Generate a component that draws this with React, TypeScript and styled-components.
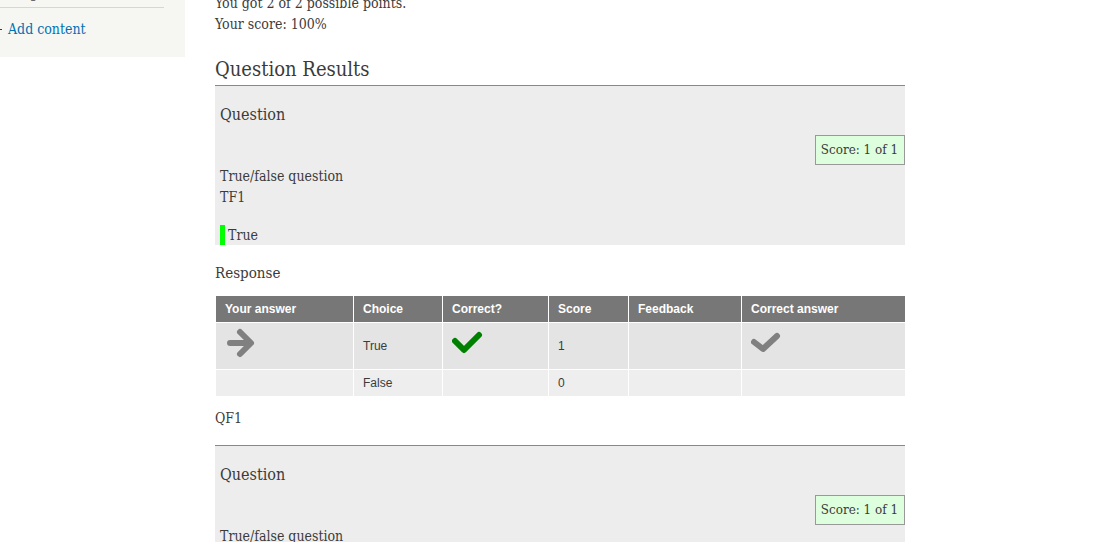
import React from "react";
import styled, {createGlobalStyle} from "styled-components";

const GlobalStyle = createGlobalStyle`
    html, body {
        margin: 0;
        padding: 0;
        background: #fff;
    }
    body {
        font-family: "DejaVu Serif Condensed", "DejaVu Serif", Georgia, serif;
        font-stretch: condensed;
        font-size: 14px;
        line-height: 21px;
        color: #3b3b3b;
        overflow: hidden;
    }
`;

const Page = styled.div`
    display: flex;
    align-items: flex-start;
    gap: 30px;
`;

const Sidebar = styled.aside`
    width: 164px;
    padding: 0 21px 17px 0;
    background: #f6f6f2;
`;

const BlockTitle = styled.h2`
    margin: -14px 0 0;
    height: 21px;
    font-size: 14px;
    line-height: 14px;
    font-weight: normal;
    border-bottom: 1px solid #d6d6d6;
    overflow: hidden;
`;

const Menu = styled.ul`
    list-style: none;
    margin: 11px 0 0;
    padding: 0;
`;

const MenuItem = styled.li`
    position: relative;
    padding-left: 8px;

    &::before {
        content: "";
        position: absolute;
        left: 0;
        top: 10px;
        width: 2px;
        height: 1px;
        background: #3b3b3b;
    }
`;

const MenuLink = styled.a`
    color: #0071b3;
    text-decoration: none;
`;

const Main = styled.main`
    width: 690px;
    margin-top: -7px;
`;

const Line = styled.p`
    margin: 0;
`;

const SectionTitle = styled.h2`
    margin: 21px 0 0;
    padding-bottom: 3px;
    font-size: 20px;
    line-height: 26px;
    font-weight: normal;
`;

const Result = styled.section`
    border-top: 1px solid #888;
`;

const QuestionBox = styled.div`
    background: #ededed;
    padding: 17px 0 0 5px;
`;

const QuestionTitle = styled.h3`
    margin: 0;
    font-size: 16px;
    line-height: 24px;
    font-weight: normal;
`;

const ScoreRow = styled.div`
    display: flex;
    justify-content: flex-end;
    margin: 8px 0 1px;
`;

const ScoreBadge = styled.div`
    background: #ddffdd;
    border: 1px solid #999;
    padding: 0 6px 0 5px;
    font-size: 13.3px;
    line-height: 28px;
`;

const Choice = styled.div`
    margin-top: 17px;
    border-left: 5px solid #00ff00;
    padding-left: 3px;
    line-height: 20px;
`;

const Subtitle = styled.h4`
    margin: 18px 0 0;
    font-size: 15px;
    line-height: 21px;
    font-weight: normal;
`;

const Table = styled.table`
    margin-top: 12px;
    width: 690px;
    border-collapse: collapse;
    table-layout: fixed;
    font-family: "Liberation Sans", Arial, sans-serif;
    font-stretch: normal;
    font-size: 12px;
    line-height: 18px;
`;

const HeadCell = styled.th<{ $w: number }>`
    box-sizing: border-box;
    width: ${({$w}) => $w}px;
    background: #777;
    color: #fff;
    font-weight: bold;
    text-align: left;
    padding: 4px 9px;
    border: 1px solid #fff;
    border-top: none;
`;

const Row = styled.tr<{ $picked?: boolean }>`
    background: ${({$picked}) => $picked ? "#e4e4e4" : "#eeeeee"};
`;

const Cell = styled.td`
    padding: 4px 9px;
    border: 1px solid #fff;
    vertical-align: middle;
    color: #3b3b3b;
`;

const Icon = styled.svg`
    display: block;
    width: 32px;
    height: 38px;
`;

const Note = styled.p`
    margin: 11px 0 16px;
`;

const ArrowIcon = () => (
    <Icon viewBox="0 0 32 38">
        <path d="M5 16 H23 M15 5 L26 16 L15 27" fill="none" stroke="#808080" strokeWidth="6"
              strokeLinecap="round" strokeLinejoin="round"/>
    </Icon>
);

const CheckIcon = ({color, points}: { color: string; points: string }) => (
    <Icon viewBox="0 0 32 38">
        <polyline points={points} fill="none" stroke={color} strokeWidth="6"
                  strokeLinecap="round" strokeLinejoin="round"/>
    </Icon>
);

const columns = [
    {label: "Your answer", w: 138},
    {label: "Choice", w: 89},
    {label: "Correct?", w: 106},
    {label: "Score", w: 80},
    {label: "Feedback", w: 113},
    {label: "Correct answer", w: 164},
];

function QuestionResult({withResponse}: { withResponse: boolean }) {
    return (
        <Result>
            <QuestionBox>
                <QuestionTitle>Question</QuestionTitle>
                <ScoreRow>
                    <ScoreBadge>Score: 1 of 1</ScoreBadge>
                </ScoreRow>
                <Line>True/false question</Line>
                <Line>TF1</Line>
                <Choice>True</Choice>
            </QuestionBox>
            {withResponse && (
                <>
                    <Subtitle>Response</Subtitle>
                    <Table>
                        <thead>
                        <tr>
                            {columns.map((col) => (
                                <HeadCell key={col.label} $w={col.w}>{col.label}</HeadCell>
                            ))}
                        </tr>
                        </thead>
                        <tbody>
                        <Row $picked>
                            <Cell><ArrowIcon/></Cell>
                            <Cell>True</Cell>
                            <Cell><CheckIcon color="#008000" points="3,14 12,23 27,8"/></Cell>
                            <Cell>1</Cell>
                            <Cell/>
                            <Cell><CheckIcon color="#808080" points="3,15 12,22 26,9"/></Cell>
                        </Row>
                        <Row>
                            <Cell/>
                            <Cell>False</Cell>
                            <Cell/>
                            <Cell>0</Cell>
                            <Cell/>
                            <Cell/>
                        </Row>
                        </tbody>
                    </Table>
                    <Note>QF1</Note>
                </>
            )}
        </Result>
    );
}

export default function App() {
    return (
        <>
            <GlobalStyle/>
            <Page>
                <Sidebar>
                    <BlockTitle>Navigation</BlockTitle>
                    <Menu>
                        <MenuItem><MenuLink href="#">Add content</MenuLink></MenuItem>
                    </Menu>
                </Sidebar>
                <Main>
                    <Line>You got 2 of 2 possible points.</Line>
                    <Line>Your score: 100%</Line>
                    <SectionTitle>Question Results</SectionTitle>
                    <QuestionResult withResponse/>
                    <QuestionResult withResponse={false}/>
                </Main>
            </Page>
        </>
    );
}
